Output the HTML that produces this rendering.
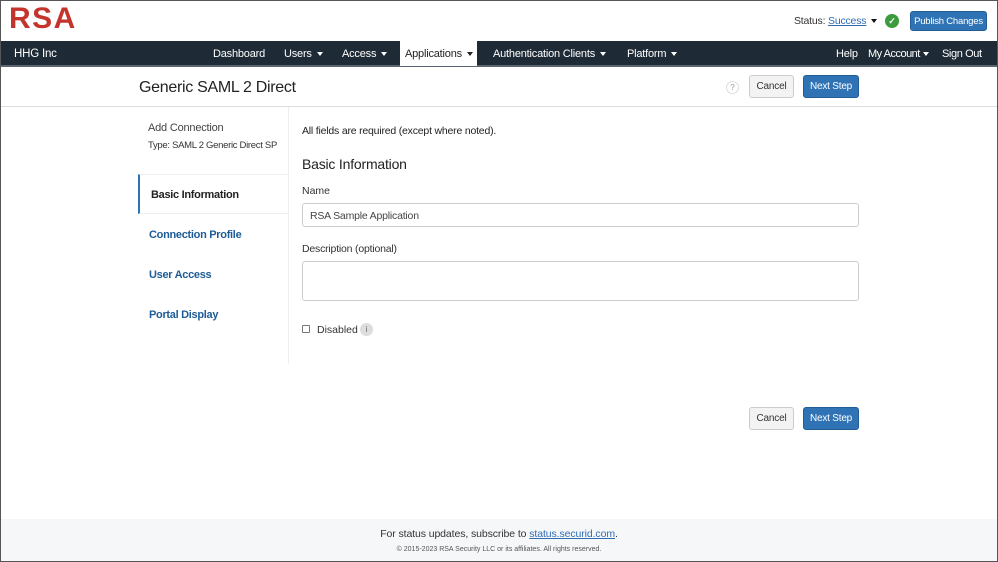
<!DOCTYPE html>
<html><head><style>
*{box-sizing:border-box;margin:0;padding:0}
html,body{width:998px;height:562px}
body{position:relative;overflow:hidden;background:#fff;font-family:"Liberation Sans",sans-serif;color:#333}
.frame{position:absolute;left:0;top:0;width:998px;height:562px;border:1px solid #555;pointer-events:none;z-index:5}
.a{position:absolute;white-space:nowrap}
.t{margin-top:1px}
.caret{display:inline-block;width:0;height:0;border-left:3.5px solid transparent;border-right:3.5px solid transparent;border-top:4px solid currentColor;vertical-align:middle;margin-left:5px}
.nav{top:41px;left:0;width:998px;height:26px;background:#1e2a35;border-bottom:2px solid #5a6470}
.nav span{position:absolute;top:7px;color:#fff;font-size:11px;letter-spacing:-0.2px;white-space:nowrap}
.btn{position:absolute;border-radius:3px;font-size:10px;text-align:center;white-space:nowrap;letter-spacing:-0.2px}
.blue{background:#2f73b5;color:#fff;border:1px solid #225d96}
.grey{background:#f3f3f3;color:#333;border:1px solid #ccc}
.side{color:#1d5c96;font-weight:bold;font-size:11px;letter-spacing:-0.3px}
</style></head><body>
<div class="frame"></div>
<div class="a" style="left:9px;top:2px;font-size:30px;font-weight:bold;color:#c4342d;letter-spacing:1.5px">RSA</div>
<div class="a" style="left:794px;top:15px;font-size:10.5px;color:#333;letter-spacing:-0.2px">Status: <span style="color:#2f6db5;text-decoration:underline">Success</span><span class="caret" style="color:#111"></span></div>
<div class="a" style="left:885px;top:14px;width:14px;height:14px;border-radius:50%;background:#3c9b3c;color:#fff;font-size:9px;text-align:center;line-height:14px;font-weight:bold">✓</div>
<div class="btn blue" style="left:910px;top:11px;width:77px;height:20px;line-height:19px;font-size:9.5px">Publish Changes</div>
<div class="a nav">
<span style="left:14px;font-size:11.5px">HHG Inc</span>
<span style="left:213px">Dashboard</span>
<span style="left:284px">Users<i class="caret"></i></span>
<span style="left:342px">Access<i class="caret"></i></span>
<span style="left:400px;top:0;height:25px;background:#fff;color:#222;padding:7px 0 0 5px;width:77px">Applications<i class="caret"></i></span>
<span style="left:493px">Authentication Clients<i class="caret"></i></span>
<span style="left:627px">Platform<i class="caret"></i></span>
<span style="left:836px">Help</span>
<span style="left:868px;letter-spacing:-0.5px">My Account<i class="caret" style="margin-left:3px"></i></span>
<span style="left:942px;letter-spacing:-0.4px">Sign Out</span>
</div>
<div class="a t" style="left:139px;top:78px;font-size:16px;color:#222;letter-spacing:-0.3px">Generic SAML 2 Direct</div>
<div class="a" style="left:726px;top:81px;width:13px;height:13px;border-radius:50%;border:1px solid #ddd;font-size:8px;color:#999;text-align:center;line-height:11px">?</div>
<div class="btn grey" style="left:749px;top:75px;width:45px;height:23px;line-height:22px">Cancel</div>
<div class="btn blue" style="left:803px;top:75px;width:56px;height:23px;line-height:22px">Next Step</div>
<div class="a" style="left:0;top:106px;width:998px;height:1px;background:#ddd"></div>
<div class="a" style="left:288px;top:107px;width:1px;height:257px;background:#eee"></div>
<div class="a t" style="left:148px;top:121px;font-size:11px;color:#444;letter-spacing:-0.2px">Add Connection</div>
<div class="a t" style="left:148px;top:139px;font-size:9.5px;color:#333;letter-spacing:-0.3px">Type: SAML 2 Generic Direct SP</div>
<div class="a" style="left:138px;top:174px;width:151px;height:40px;border-left:2px solid #2f73b5;border-top:1px solid #eee;border-bottom:1px solid #eee"></div>
<div class="a t" style="left:151px;top:188px;font-size:11px;font-weight:bold;color:#222;letter-spacing:-0.3px">Basic Information</div>
<div class="a side t" style="left:149px;top:228px">Connection Profile</div>
<div class="a side t" style="left:149px;top:268px">User Access</div>
<div class="a side t" style="left:149px;top:308px">Portal Display</div>
<div class="a t" style="left:302px;top:124px;font-size:10.5px;color:#222;letter-spacing:-0.2px">All fields are required (except where noted).</div>
<div class="a t" style="left:302px;top:155px;font-size:14px;color:#222;letter-spacing:-0.2px">Basic Information</div>
<div class="a t" style="left:302px;top:184px;font-size:10.5px;color:#333">Name</div>
<div class="a" style="left:302px;top:203px;width:557px;height:24px;border:1px solid #ccc;border-radius:3px"></div>
<div class="a t" style="left:310px;top:209px;font-size:10.5px;color:#444;letter-spacing:-0.2px">RSA Sample Application</div>
<div class="a t" style="left:302px;top:242px;font-size:10.5px;color:#333;letter-spacing:-0.2px">Description (optional)</div>
<div class="a" style="left:302px;top:261px;width:557px;height:40px;border:1px solid #ccc;border-radius:3px"></div>
<div class="a" style="left:302px;top:325px;width:8px;height:8px;border:1px solid #777;border-radius:1px"></div>
<div class="a t" style="left:317px;top:323px;font-size:10.5px;color:#333">Disabled</div>
<div class="a" style="left:360px;top:323px;width:13px;height:13px;border-radius:50%;background:#ddd;font-size:8px;color:#666;text-align:center;line-height:13px">i</div>
<div class="btn grey" style="left:749px;top:407px;width:45px;height:23px;line-height:22px">Cancel</div>
<div class="btn blue" style="left:803px;top:407px;width:56px;height:23px;line-height:22px">Next Step</div>
<div class="a" style="left:0;top:519px;width:998px;height:43px;background:#f6f7f9"></div>
<div class="a t" style="left:0;top:527px;width:998px;text-align:center;font-size:10.5px;color:#333;letter-spacing:-0.1px">For status updates, subscribe to <span style="color:#2f6db5;text-decoration:underline">status.securid.com</span>.</div>
<div class="a t" style="left:0;top:545px;width:998px;text-align:center;font-size:7px;color:#555">© 2015-2023 RSA Security LLC or its affiliates. All rights reserved.</div>
</body></html>
